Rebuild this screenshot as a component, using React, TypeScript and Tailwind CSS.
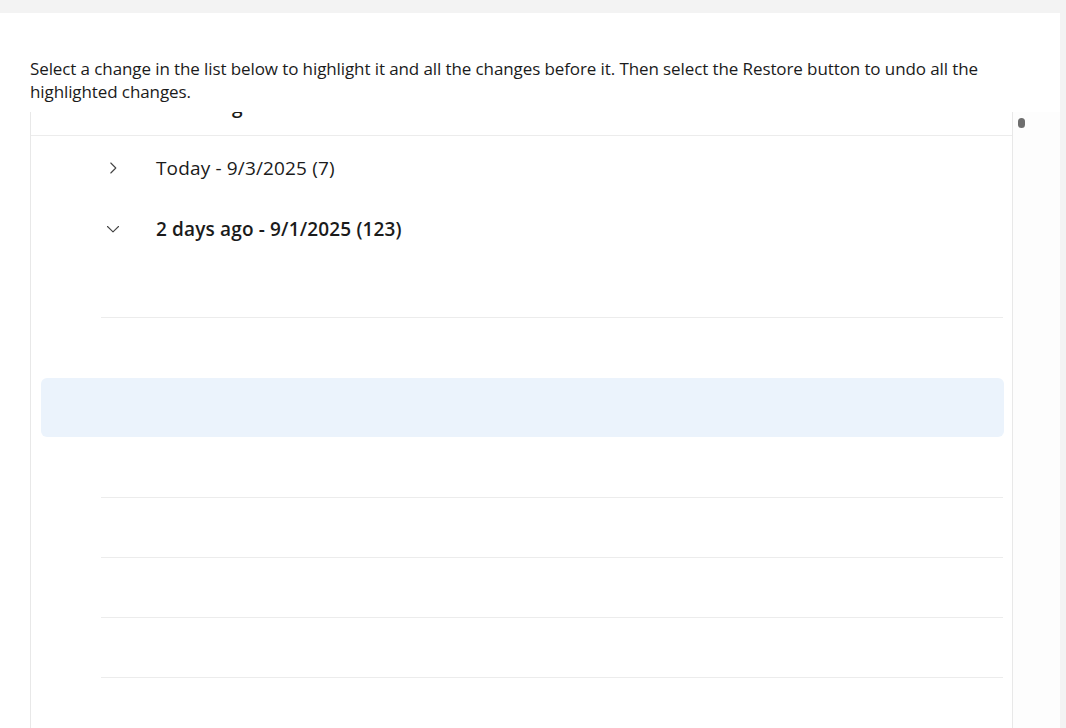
import React from "react";

const ChevronRight = () => (
  <svg width="16" height="16" viewBox="0 0 16 16" fill="none">
    <path d="M5.8 3 L10.8 8 L5.8 13" stroke="#444444" strokeWidth="1.1" strokeLinecap="round" strokeLinejoin="round" />
  </svg>
);
const ChevronDown = () => (
  <svg width="16" height="16" viewBox="0 0 16 16" fill="none">
    <path d="M2.5 5.5 L8 10.8 L13.5 5.5" stroke="#444444" strokeWidth="1.1" strokeLinecap="round" strokeLinejoin="round" />
  </svg>
);

const Sep = () => <div className="ml-[70px] mr-[9px] h-px bg-[#ececec]" />;

export default function App() {
  return (
    <div className="w-[1066px] h-[728px] bg-[#f3f3f3] overflow-hidden" style={{ fontFamily: '"Open Sans", "Noto Sans", sans-serif' }}>
      <div className="mt-[13px] w-[1060px] h-[715px] bg-white flex flex-col">
        <p className="pt-[44px] px-[30px] text-[17px] leading-[23px] text-[#1b1b1b] tracking-[-0.1px]">
          Select a change in the list below to highlight it and all the changes before it. Then select the Restore button to undo all the highlighted changes.
        </p>
        <div className="mt-[9px] flex flex-1 min-h-0">
          <div className="ml-[30px] w-[983px] border-l border-r border-[#e8e8e8] flex flex-col">
            <div className="h-[24px] shrink-0 overflow-hidden border-b border-[#ececec]">
              <div className="pl-[201px] -mt-[18px] text-[19px] font-semibold leading-[24px] text-[#1b1b1b]">g</div>
            </div>
            <div className="h-[64px] shrink-0 flex items-center">
              <div className="pl-[74px] w-[125px] flex"><ChevronRight /></div>
              <span className="text-[19px] tracking-[0.15px] text-[#1b1b1b]">Today - 9/3/2025 (7)</span>
            </div>
            <div className="h-[58px] shrink-0 flex items-center">
              <div className="pl-[74px] w-[125px] flex"><ChevronDown /></div>
              <span className="text-[19px] tracking-[0.15px] font-semibold text-[#1b1b1b]">2 days ago - 9/1/2025 (123)</span>
            </div>
            <div className="h-[59px] shrink-0" />
            <Sep />
            <div className="h-[60px] shrink-0" />
            <div className="ml-[10px] mr-[8px] h-[59px] shrink-0 rounded-[6px] bg-[#ebf3fc]" />
            <div className="h-[60px] shrink-0" />
            <Sep />
            <div className="h-[59px] shrink-0" />
            <Sep />
            <div className="h-[59px] shrink-0" />
            <Sep />
            <div className="h-[59px] shrink-0" />
            <Sep />
            <div className="flex-1" />
          </div>
          <div className="flex-1 bg-[#fdfdfd] pt-[6px] pl-[5px]">
            <div className="w-[7px] h-[10px] rounded-full bg-[#6e6e6e]" />
          </div>
        </div>
      </div>
    </div>
  );
}
